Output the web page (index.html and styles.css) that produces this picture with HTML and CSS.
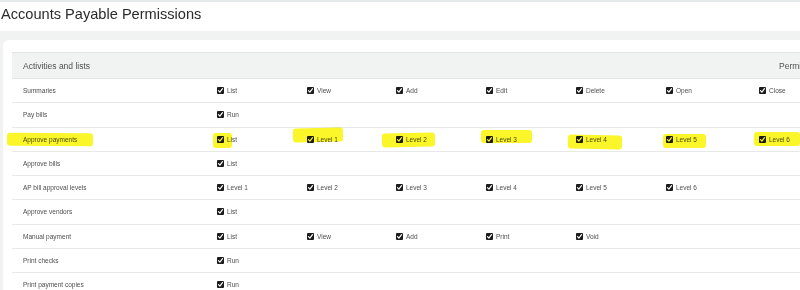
FILE: index.html
```
<!DOCTYPE html>
<html>
<head>
<meta charset="utf-8">
<link rel="stylesheet" href="styles.css">
</head>
<body>
<svg width="0" height="0" class="defs">
  <symbol id="cb" viewBox="0 0 7 7">
    <rect width="7" height="7" rx="1" fill="#1c1c1c"/>
    <path d="M1.5 3.6 L2.9 5.1 L5.5 1.7" stroke="#fff" stroke-width="1.2" fill="none" stroke-linecap="round" stroke-linejoin="round"/>
  </symbol>
</svg>
<div class="topbar"></div>
<h1 class="title">Accounts Payable Permissions</h1>
<div class="page">
  <div class="card">
    <div class="row head">
      <div class="hlabel">Activities and lists</div>
      <div class="hperm">Permissions</div>
    </div>
    <div class="row">
      <div class="label">Summaries</div>
      <div class="cell"><svg class="box"><use href="#cb"/></svg>List</div>
      <div class="cell"><svg class="box"><use href="#cb"/></svg>View</div>
      <div class="cell"><svg class="box"><use href="#cb"/></svg>Add</div>
      <div class="cell"><svg class="box"><use href="#cb"/></svg>Edit</div>
      <div class="cell"><svg class="box"><use href="#cb"/></svg>Delete</div>
      <div class="cell"><svg class="box"><use href="#cb"/></svg>Open</div>
      <div class="cell"><svg class="box"><use href="#cb"/></svg>Close</div>
    </div>
    <div class="row">
      <div class="label">Pay bills</div>
      <div class="cell"><svg class="box"><use href="#cb"/></svg>Run</div>
    </div>
    <div class="row">
      <div class="label">Approve payments</div>
      <div class="cell"><svg class="box"><use href="#cb"/></svg>List</div>
      <div class="cell"><svg class="box"><use href="#cb"/></svg>Level 1</div>
      <div class="cell"><svg class="box"><use href="#cb"/></svg>Level 2</div>
      <div class="cell"><svg class="box"><use href="#cb"/></svg>Level 3</div>
      <div class="cell"><svg class="box"><use href="#cb"/></svg>Level 4</div>
      <div class="cell"><svg class="box"><use href="#cb"/></svg>Level 5</div>
      <div class="cell"><svg class="box"><use href="#cb"/></svg>Level 6</div>
    </div>
    <div class="row">
      <div class="label">Approve bills</div>
      <div class="cell"><svg class="box"><use href="#cb"/></svg>List</div>
    </div>
    <div class="row">
      <div class="label">AP bill approval levels</div>
      <div class="cell"><svg class="box"><use href="#cb"/></svg>Level 1</div>
      <div class="cell"><svg class="box"><use href="#cb"/></svg>Level 2</div>
      <div class="cell"><svg class="box"><use href="#cb"/></svg>Level 3</div>
      <div class="cell"><svg class="box"><use href="#cb"/></svg>Level 4</div>
      <div class="cell"><svg class="box"><use href="#cb"/></svg>Level 5</div>
      <div class="cell"><svg class="box"><use href="#cb"/></svg>Level 6</div>
    </div>
    <div class="row">
      <div class="label">Approve vendors</div>
      <div class="cell"><svg class="box"><use href="#cb"/></svg>List</div>
    </div>
    <div class="row">
      <div class="label">Manual payment</div>
      <div class="cell"><svg class="box"><use href="#cb"/></svg>List</div>
      <div class="cell"><svg class="box"><use href="#cb"/></svg>View</div>
      <div class="cell"><svg class="box"><use href="#cb"/></svg>Add</div>
      <div class="cell"><svg class="box"><use href="#cb"/></svg>Print</div>
      <div class="cell"><svg class="box"><use href="#cb"/></svg>Void</div>
    </div>
    <div class="row">
      <div class="label">Print checks</div>
      <div class="cell"><svg class="box"><use href="#cb"/></svg>Run</div>
    </div>
    <div class="row">
      <div class="label">Print payment copies</div>
      <div class="cell"><svg class="box"><use href="#cb"/></svg>Run</div>
    </div>
  </div>
</div>
<div class="marks">
  <div class="mark m1"></div>
  <div class="mark m2"></div>
  <div class="mark m3"></div>
  <div class="mark m4"></div>
  <div class="mark m5"></div>
  <div class="mark m6"></div>
  <div class="mark m7"></div>
  <div class="mark m8"></div>
</div>
</body>
</html>
```
FILE: styles.css
```
html, body {
  margin: 0;
  padding: 0;
  width: 800px;
  height: 290px;
  overflow: hidden;
  background: #ffffff;
  font-family: "Liberation Sans", Arial, sans-serif;
}
.defs {
  position: absolute;
}
.topbar {
  height: 2px;
  background: #e6eaea;
}
.title {
  margin: 0;
  height: 29px;
  box-sizing: border-box;
  padding: 4px 0 0 1px;
  font-size: 14.6px;
  line-height: 17px;
  font-weight: normal;
  color: #2b2b2b;
  white-space: nowrap;
}
.page {
  background: #f1f3f3;
  padding: 9px 0 0 3px;
}
.card {
  background: #ffffff;
  border-radius: 6px 0 0 0;
  padding: 12px 0 0 9px;
}
.row {
  display: grid;
  grid-template-columns: 205px 90px 89px 90px 90px 90px 93px 1fr;
  height: 24.25px;
  box-sizing: border-box;
  border-bottom: 1px solid #e7e9e9;
  align-items: center;
  font-size: 6.5px;
  color: #4e4e4e;
  white-space: nowrap;
}
.row.head {
  height: 27px;
  background: #f1f3f3;
  border-top: 1px solid #e0e4e4;
  border-bottom: 1px solid #e4e7e7;
  font-size: 8.5px;
  color: #505050;
}
.hlabel {
  padding-left: 11px;
  grid-column: 1 / 8;
}
.hperm {
  grid-column: 8;
  padding-left: 20px;
}
.label {
  padding-left: 11px;
}
.cell {
  display: flex;
  align-items: center;
  gap: 3px;
}
.box {
  width: 7px;
  height: 7px;
  flex: none;
}
.marks {
  position: absolute;
  left: 0;
  top: 0;
  width: 800px;
  height: 290px;
  pointer-events: none;
}
.mark {
  position: absolute;
  background: #fbf62a;
  mix-blend-mode: multiply;
  border-radius: 3px;
}
.m1 { left: 7px; top: 133px; width: 86px; height: 13px; transform: rotate(0.5deg); }
.m2 { left: 213px; top: 133px; width: 19px; height: 15px; }
.m3 { left: 293px; top: 128px; width: 50px; height: 14px; transform: rotate(-1deg); }
.m4 { left: 382px; top: 133px; width: 53px; height: 14px; transform: rotate(-1deg); }
.m5 { left: 481px; top: 130px; width: 51px; height: 13px; }
.m6 { left: 568px; top: 135px; width: 54px; height: 14px; transform: rotate(1deg); }
.m7 { left: 663px; top: 134px; width: 43px; height: 14px; }
.m8 { left: 754px; top: 132px; width: 46px; height: 14px; }
```
